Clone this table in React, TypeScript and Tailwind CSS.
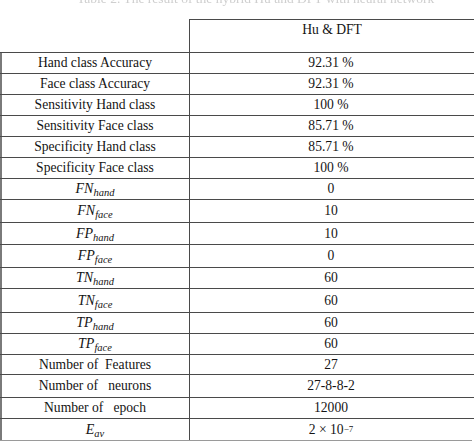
import React from "react";

type Row = { h: string; left: React.ReactNode; right: React.ReactNode };

const M = ({ b, s }: { b: string; s: string }) => (
  <span className="italic font-['Liberation_Serif',serif] text-[14px]">
    {b}
    <span className="text-[10.5px] relative top-[3px]">{s}</span>
  </span>
);

const rows: Row[] = [
  { h: "h-[21px]", left: "Hand class Accuracy", right: "92.31 %" },
  { h: "h-[21px]", left: "Face class Accuracy", right: "92.31 %" },
  { h: "h-[21px]", left: "Sensitivity Hand class", right: "100 %" },
  { h: "h-[21px]", left: "Sensitivity Face class", right: "85.71 %" },
  { h: "h-[21px]", left: "Specificity Hand class", right: "85.71 %" },
  { h: "h-[21px]", left: "Specificity Face class", right: "100 %" },
  { h: "h-[21px]", left: <M b="FN" s="hand" />, right: "0" },
  { h: "h-[23px]", left: <M b="FN" s="face" />, right: "10" },
  { h: "h-[22px]", left: <M b="FP" s="hand" />, right: "10" },
  { h: "h-[23px]", left: <M b="FP" s="face" />, right: "0" },
  { h: "h-[21px]", left: <M b="TN" s="hand" />, right: "60" },
  { h: "h-[24px]", left: <M b="TN" s="face" />, right: "60" },
  { h: "h-[21px]", left: <M b="TP" s="hand" />, right: "60" },
  { h: "h-[21px]", left: <M b="TP" s="face" />, right: "60" },
  { h: "h-[20px]", left: <span className="whitespace-pre">Number of  Features</span>, right: "27" },
  { h: "h-[23px]", left: <span className="whitespace-pre">Number of   neurons</span>, right: "27-8-8-2" },
  { h: "h-[21px]", left: <span className="whitespace-pre">Number of   epoch</span>, right: "12000" },
  {
    h: "h-[22px]",
    left: <M b="E" s="av" />,
    right: (
      <span>
        2 × 10<sup className="text-[9px] relative -top-[2px]">−7</sup>
      </span>
    ),
  },
];

export default function App() {
  return (
    <div className="w-[474px] h-[441px] bg-white overflow-hidden font-['Liberation_Serif',serif] text-[13.6px] text-[#141414]">
      <div className="h-[19px] overflow-hidden">
        <div className="-mt-[11px] ml-[77px] w-[370px] text-[13.5px] text-[#cfcfcf] whitespace-nowrap overflow-hidden blur-[0.5px]">
          Table 2. The result of the hybrid Hu and DFT with neural network
        </div>
      </div>
      <div className="flex h-[33px]">
        <div className="w-[189px] shrink-0" />
        <div className="flex-1 border-t border-l border-[#4a4a4a] flex justify-center pt-[1px] leading-[18px]">
          Hu &amp; DFT
        </div>
      </div>
      {rows.map((r, i) => (
        <div key={i} className={`flex ${r.h} border-t border-[#4a4a4a]`}>
          <div className="w-[189px] shrink-0 border-l-2 border-[#7a7a7a] flex items-center justify-center leading-none pr-[1px]">
            {r.left}
          </div>
          <div className="flex-1 border-l border-[#4a4a4a] flex items-center justify-center leading-none pr-[2px]">
            {r.right}
          </div>
        </div>
      ))}
      <div className="h-[2px] bg-[#9a9a9a] mr-[2px]" />
    </div>
  );
}
